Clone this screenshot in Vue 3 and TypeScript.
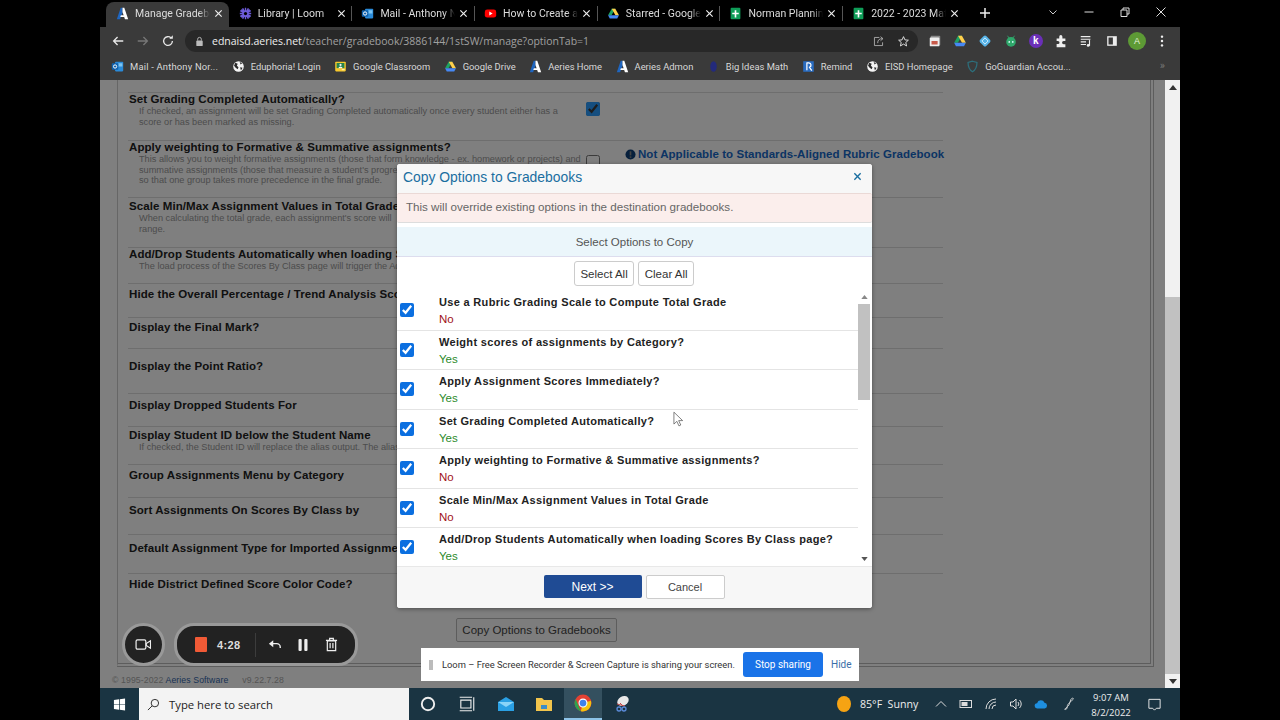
<script setup lang="ts">
// --- favicon and small icon artwork, 16x16 viewBox ---
const icons: Record<string, string> = {
  aeries: '<path d="M5.800 1H8v6L5 15H1z" fill="#1f66c0"/><path d="M8 1h2.200L15 15h-4L8 6z" fill="#fff"/><path d="M6 10h4l.8 2.400H5.200z" fill="#fff"/>',
  loom: '<g stroke="#6d5bd8" stroke-width="1.700"><path d="M8 1v14M1 8h14M3 3l10 10M13 3L3 13M4.500 1.500l7 13M11.500 1.500l-7 13M1.500 4.500l13 7M14.500 4.500l-13 7"/></g><circle cx="8" cy="8" r="2" fill="#000"/>',
  mail: '<rect x="5" y="2" width="10" height="12" rx="1" fill="#2a8ad8"/><rect x="9" y="4" width="5" height="4" fill="#7cc4f2"/><rect x="1" y="4" width="8" height="8" rx="1" fill="#0f62ae"/><circle cx="5" cy="8" r="2" fill="none" stroke="#fff" stroke-width="1.200"/>',
  youtube: '<rect x="1" y="3" width="14" height="10" rx="3" fill="#f00"/><path d="M6.500 5.600v4.800L10.600 8z" fill="#fff"/>',
  drive: '<path d="M5.800 2h4.400l-4.600 8H1.300z" fill="#1ea362"/><path d="M5.800 2h4.400l4.500 8h-4.400z" fill="#ffd04b"/><path d="M1.300 10h13.400L12.600 14H3.400z" fill="#4688f4"/>',
  sheets: '<rect x="2" y="1" width="12" height="14" rx="1.200" fill="#0f9d58"/><path d="M7 4h2v3h3v1.800H9V13H7V8.800H4V7h3z" fill="#fff"/>',
  globe: '<circle cx="8" cy="8" r="6.500" fill="#f4f4f4"/><path d="M4 3.500l3 1-1 2.500 2 2-1 2.500-2.500-2L2.500 7zM10 9l3 .5-2 3.500zM9.500 2.500l3 1.500-2 1.500z" fill="#2b2b2b"/>',
  classroom: '<rect x="1.500" y="2" width="13" height="12" rx="1" fill="#f8c92c"/><rect x="3.200" y="3.700" width="9.600" height="6.300" fill="#27834c"/><circle cx="8" cy="6" r="1.300" fill="#f3f3f3"/><path d="M5.500 10a2.500 2 0 0 1 5 0z" fill="#f3f3f3"/><rect x="9.500" y="11.500" width="3.500" height="1" fill="#fff"/>',
  bigideas: '<ellipse cx="8" cy="8" rx="4" ry="6.500" fill="#232a7c"/>',
  remind: '<rect x="1.500" y="1.500" width="13" height="13" fill="#2a6cc0"/><path d="M5.500 3.500h3a2.800 2.800 0 0 1 .8 5.400l2.700 4.100M6 3.500v9" fill="none" stroke="#fff" stroke-width="1.500"/>',
  goguardian: '<path d="M8 1.500l5.500 1.500c0 5-1.500 9-5.500 11.500C4 12 2.500 8 2.500 3z" fill="none" stroke="#2d6f7c" stroke-width="1.500"/>'
}

const tabs = [
  { title: 'Manage Gradebook', icon: 'aeries' },
  { title: 'Library | Loom', icon: 'loom' },
  { title: 'Mail - Anthony Norman', icon: 'mail' },
  { title: 'How to Create an Assignment', icon: 'youtube' },
  { title: 'Starred - Google Drive', icon: 'drive' },
  { title: 'Norman Planning Guide', icon: 'sheets' },
  { title: '2022 - 2023 Math Pacing', icon: 'sheets' }
]

const bookmarks = [
  { title: 'Mail - Anthony Nor...', icon: 'mail' },
  { title: 'Eduphoria! Login', icon: 'globe' },
  { title: 'Google Classroom', icon: 'classroom' },
  { title: 'Google Drive', icon: 'drive' },
  { title: 'Aeries Home', icon: 'aeries' },
  { title: 'Aeries Admon', icon: 'aeries' },
  { title: 'Big Ideas Math', icon: 'bigideas' },
  { title: 'Remind', icon: 'remind' },
  { title: 'EISD Homepage', icon: 'globe' },
  { title: 'GoGuardian Accou...', icon: 'goguardian' }
]

// height and title offset come from the gradebook options table
const pageRows = [
  { title: 'Set Grading Completed Automatically?', h: 48, top: 0, check: 'on', lines: ['If checked, an assignment will be set Grading Completed automatically once every student either has a', 'score or has been marked as missing.'] },
  { title: 'Apply weighting to Formative & Summative assignments?', h: 57, top: 0, check: 'off', lines: ['This allows you to weight formative assignments (those that form knowledge - ex. homework or projects) and', 'summative assignments (those that measure a student\'s progress', 'so that one group takes more precedence in the final grade.'] },
  { title: 'Scale Min/Max Assignment Values in Total Grade', h: 50, top: 2, lines: ['When calculating the total grade, each assignment\'s score will', 'range.'] },
  { title: 'Add/Drop Students Automatically when loading Scores', h: 36, top: 0, lines: ['The load process of the Scores By Class page will trigger the Add'] },
  { title: 'Hide the Overall Percentage / Trend Analysis Score', h: 34, top: 4, lines: [] },
  { title: 'Display the Final Mark?', h: 31, top: 3, lines: [] },
  { title: 'Display the Point Ratio?', h: 45, top: 11, lines: [] },
  { title: 'Display Dropped Students For', h: 33, top: 5, lines: [] },
  { title: 'Display Student ID below the Student Name', h: 38, top: 2, lines: ['If checked, the Student ID will replace the alias output. The alias'] },
  { title: 'Group Assignments Menu by Category', h: 33, top: 4, lines: [] },
  { title: 'Sort Assignments On Scores By Class by', h: 37, top: 6, lines: [] },
  { title: 'Default Assignment Type for Imported Assignments', h: 39, top: 7, lines: [] },
  { title: 'Hide District Defined Score Color Code?', h: 32, top: 4, lines: [] }
]

const copyOptions = [
  { title: 'Use a Rubric Grading Scale to Compute Total Grade', value: 'No' },
  { title: 'Weight scores of assignments by Category?', value: 'Yes' },
  { title: 'Apply Assignment Scores Immediately?', value: 'Yes' },
  { title: 'Set Grading Completed Automatically?', value: 'Yes' },
  { title: 'Apply weighting to Formative & Summative assignments?', value: 'No' },
  { title: 'Scale Min/Max Assignment Values in Total Grade', value: 'No' },
  { title: 'Add/Drop Students Automatically when loading Scores By Class page?', value: 'Yes' }
]
</script>

<template>
  <div class="screen">
    <div class="browser">
      <!-- ===== TAB STRIP ===== -->
      <div class="tab-strip">
        <div v-for="(tab, i) in tabs" :key="i" class="tab" :class="{ active: i === 0 }">
          <svg class="fav" viewBox="0 0 16 16" v-html="icons[tab.icon]"></svg>
          <span class="tab-title">{{ tab.title }}</span>
          <svg class="tab-x" viewBox="0 0 10 10"><path d="M1.500 1.500l7 7M8.500 1.500l-7 7" stroke="#eee" stroke-width="1.300"/></svg>
        </div>
        <svg class="new-tab" viewBox="0 0 12 12"><path d="M6 1v10M1 6h10" stroke="#eee" stroke-width="1.500"/></svg>
        <div class="win-controls">
          <svg viewBox="0 0 12 12"><path d="M2.500 4.500L6 8l3.500-3.500" fill="none" stroke="#ccc"/></svg>
          <svg viewBox="0 0 12 12"><path d="M1.500 6h9" stroke="#ddd"/></svg>
          <svg viewBox="0 0 12 12"><path d="M2 4h6v6.500H2zM4 4V2h6v6H8" fill="none" stroke="#ddd"/></svg>
          <svg viewBox="0 0 12 12"><path d="M1.500 1.500l9 9M10.500 1.500l-9 9" stroke="#ddd"/></svg>
        </div>
      </div>

      <!-- ===== TOOLBAR ===== -->
      <div class="toolbar">
        <div class="nav-btn"><svg viewBox="0 0 16 16"><path d="M14 8H3M7.500 3.500L3 8l4.500 4.500" fill="none" stroke="#e8e8e8" stroke-width="1.500"/></svg></div>
        <div class="nav-btn"><svg viewBox="0 0 16 16"><path d="M2 8h11M8.500 3.500L13 8l-4.500 4.500" fill="none" stroke="#777" stroke-width="1.500"/></svg></div>
        <div class="nav-btn"><svg viewBox="0 0 16 16"><path d="M13 8a5 5 0 1 1-1.500-3.500" fill="none" stroke="#e8e8e8" stroke-width="1.500"/><path d="M13.500 1.500v4h-4z" fill="#e8e8e8"/></svg></div>
        <div class="omnibox">
          <svg class="lock" viewBox="0 0 12 12"><rect x="2.500" y="5" width="7" height="6" rx="1" fill="#bbb"/><path d="M4 5V3.500a2 2 0 0 1 4 0V5" fill="none" stroke="#bbb"/></svg>
          <span class="url"><b>ednaisd.aeries.net</b>/teacher/gradebook/3886144/1stSW/manage?optionTab=1</span>
          <svg class="omni-icon share" viewBox="0 0 16 16"><path d="M9 3H3v10h10V9M7 10c0-4 2-5.500 6-5.500M10.500 2l3 2.500-3 2.500" fill="none" stroke="#bbb"/></svg>
          <svg class="omni-icon" viewBox="0 0 16 16"><path d="M8 2l1.800 4 4.200.4-3.200 2.800 1 4.300L8 11.200 4.200 13.500l1-4.300L2 6.400 6.200 6z" fill="none" stroke="#ddd" stroke-width="1.200"/></svg>
        </div>
        <div class="ext-icons">
          <div class="ext"><svg viewBox="0 0 16 16"><rect x="3" y="2" width="11" height="11" rx="1" fill="#888"/><rect x="2" y="4" width="11" height="10" rx="1" fill="#eee"/><rect x="4" y="8" width="7" height="4" fill="#c85a4a"/></svg></div>
          <div class="ext"><svg viewBox="0 0 16 16" v-html="icons.drive"></svg></div>
          <div class="ext"><svg viewBox="0 0 16 16"><rect x="3" y="3" width="10" height="10" rx="2" transform="rotate(45 8 8)" fill="#58b4e8"/><rect x="5.500" y="5.500" width="5" height="5" transform="rotate(45 8 8)" fill="none" stroke="#d5f0ff"/></svg></div>
          <div class="ext"><svg viewBox="0 0 16 16"><circle cx="8" cy="9" r="5.500" fill="#2fa86b"/><path d="M4 2l2 3M12 2l-2 3" stroke="#2fa86b"/><circle cx="6" cy="9" r="1" fill="#dff"/><circle cx="10" cy="9" r="1" fill="#dff"/></svg></div>
          <div class="ext"><span class="k-badge">k</span></div>
          <div class="ext"><svg viewBox="0 0 16 16"><path d="M3 5h3V3a1.800 1.800 0 0 1 3.600 0v2h3.400v3h-2a1.800 1.800 0 0 0 0 3.600h2V15H3v-3.500h1.500a1.800 1.800 0 0 0 0-3.600H3z" fill="#eee"/></svg></div>
          <div class="ext"><svg viewBox="0 0 16 16"><path d="M2 3h11M2 6h11M2 9h6M2 12h6" stroke="#eee" stroke-width="1.300"/><path d="M12 7v6.500" stroke="#eee" stroke-width="1.300"/><circle cx="10.500" cy="13" r="1.600" fill="#eee"/></svg></div>
          <div class="ext"><svg viewBox="0 0 16 16"><rect x="2.500" y="2.500" width="11" height="11" fill="#eee"/><rect x="4" y="4" width="5" height="8" fill="#3a3a3a"/></svg></div>
          <div class="ext"><span class="avatar">A</span></div>
          <div class="ext"><svg viewBox="0 0 16 16"><circle cx="8" cy="3" r="1.400" fill="#eee"/><circle cx="8" cy="8" r="1.400" fill="#eee"/><circle cx="8" cy="13" r="1.400" fill="#eee"/></svg></div>
        </div>
      </div>

      <!-- ===== BOOKMARKS ===== -->
      <div class="bookmarks">
        <div v-for="(bm, i) in bookmarks" :key="i" class="bookmark">
          <svg class="fav" viewBox="0 0 16 16" v-html="icons[bm.icon]"></svg>
          <span>{{ bm.title }}</span>
        </div>
        <span class="more">»</span>
      </div>

      <!-- ===== PAGE ===== -->
      <div class="page">
        <div class="page-main">
          <div class="frame">
            <div
              v-for="(row, i) in pageRows"
              :key="i"
              class="opt-row"
              :style="{ height: row.h + 'px', paddingTop: row.top + 'px' }"
            >
              <div class="opt-text">
                <div class="opt-title">{{ row.title }}</div>
                <div v-for="(line, j) in row.lines" :key="j" class="opt-desc">{{ line }}</div>
              </div>
              <input v-if="row.check" class="opt-check" :class="'check-' + row.check" type="checkbox" :checked="row.check === 'on'" />
              <div v-if="row.check === 'off'" class="not-applicable">
                <svg viewBox="0 0 12 12"><circle cx="6" cy="6" r="5.500" fill="#0d3f78"/><rect x="5.100" y="2.500" width="1.800" height="4.500" fill="#888"/><rect x="5.100" y="8" width="1.800" height="1.700" fill="#888"/></svg>
                Not Applicable to Standards-Aligned Rubric Gradebook
              </div>
            </div>
            <button class="copy-btn">Copy Options to Gradebooks</button>
          </div>
          <div class="page-footer">© 1995-2022 <span class="aeries-link">Aeries Software</span><span class="version">v9.22.7.28</span></div>
        </div>
        <div class="page-scroll">
          <div class="page-arrow"><svg viewBox="0 0 8 5"><path d="M4 0l4 5H0z" fill="#333"/></svg></div>
          <div class="page-track"></div>
          <div class="page-thumb"></div>
          <div class="page-arrow"><svg viewBox="0 0 8 5"><path d="M0 0h8L4 5z" fill="#333"/></svg></div>
        </div>

        <div class="backdrop"></div>

        <!-- ===== COPY OPTIONS DIALOG ===== -->
        <div class="modal">
          <div class="modal-head">
            <span>Copy Options to Gradebooks</span>
            <svg viewBox="0 0 10 10"><path d="M1.500 1.500l7 7M8.500 1.500l-7 7" stroke="#1a6ea0" stroke-width="1.500"/></svg>
          </div>
          <div class="modal-alert">This will override existing options in the destination gradebooks.</div>
          <div class="modal-band">Select Options to Copy</div>
          <div class="modal-actions">
            <button>Select All</button>
            <button>Clear All</button>
          </div>
          <div class="modal-list">
            <div class="list-rows">
              <div v-for="(opt, i) in copyOptions" :key="i" class="list-row">
                <input type="checkbox" checked />
                <div>
                  <div class="list-title">{{ opt.title }}</div>
                  <div class="list-value" :class="opt.value === 'Yes' ? 'yes' : 'no'">{{ opt.value }}</div>
                </div>
              </div>
            </div>
            <div class="list-scroll">
              <svg viewBox="0 0 8 5"><path d="M4 0l4 5H0z" fill="#888"/></svg>
              <div class="list-thumb"></div>
              <div class="list-gap"></div>
              <svg viewBox="0 0 8 5"><path d="M0 0h8L4 5z" fill="#555"/></svg>
            </div>
          </div>
          <div class="modal-foot">
            <button class="next-btn">Next &gt;&gt;</button>
            <button class="cancel-btn">Cancel</button>
          </div>
        </div>

        <!-- mouse pointer -->
        <svg class="pointer" viewBox="0 0 12 18"><path d="M1 1v13l3.200-3 2.300 5 2-1-2.300-4.800H10.500z" fill="#fff" stroke="#555" stroke-width=".8"/></svg>

        <!-- ===== RECORDER CONTROLS ===== -->
        <div class="recorder">
          <div class="rec-cam">
            <svg viewBox="0 0 18 14"><rect x="1" y="2" width="10.500" height="10" rx="1.500" fill="none" stroke="#eee" stroke-width="1.300"/><path d="M12 6l4.500-3v8L12 8z" fill="none" stroke="#eee" stroke-width="1.200"/></svg>
          </div>
          <div class="rec-pill">
            <span class="rec-stop"></span>
            <span class="rec-time">4:28</span>
            <span class="rec-sep"></span>
            <svg class="rec-undo" viewBox="0 0 16 14"><path d="M3.500 6H10a4 4 0 0 1 4 4v1" fill="none" stroke="#eee" stroke-width="1.600"/><path d="M1 6l5-4v8z" fill="#eee"/></svg>
            <svg class="rec-pause" viewBox="0 0 12 14"><rect x="1.500" y="1" width="3.200" height="12" rx="1" fill="#eee"/><rect x="7.300" y="1" width="3.200" height="12" rx="1" fill="#eee"/></svg>
            <svg class="rec-trash" viewBox="0 0 14 16"><path d="M2.500 4h9v10.500h-9zM1 3.500h12M5 3V1.500h4V3M5.500 6.500v5.500M8.500 6.500v5.500" fill="none" stroke="#eee" stroke-width="1.300"/></svg>
          </div>
        </div>

        <!-- ===== SCREEN SHARE NOTICE ===== -->
        <div class="share-bar">
          <span class="grip"></span>
          <span class="share-text">Loom – Free Screen Recorder &amp; Screen Capture is sharing your screen.</span>
          <button class="stop-btn">Stop sharing</button>
          <span class="hide-link">Hide</span>
        </div>
      </div>

      <!-- ===== TASKBAR ===== -->
      <div class="taskbar">
        <div class="start"><svg viewBox="0 0 14 14"><path d="M1 2.200L6.500 1.400v5.200H1zM7.300 1.300L13 .5v6.100H7.300zM1 7.400h5.500v5.200L1 11.800zM7.300 7.400H13v6.100l-5.700-.8z" fill="#fff"/></svg></div>
        <div class="search">
          <svg viewBox="0 0 14 14"><circle cx="8.500" cy="5.500" r="4" fill="none" stroke="#222"/><path d="M5.500 8.500L1 13" stroke="#222"/></svg>
          <span>Type here to search</span>
        </div>
        <div class="task-icon"><svg viewBox="0 0 16 16"><circle cx="8" cy="8" r="5.500" fill="none" stroke="#eee" stroke-width="1.700"/></svg></div>
        <div class="task-icon"><svg viewBox="0 0 16 16"><path d="M2.500 4.500h9v7h-9zM1.500 2h11M1.500 14h11M14 2v12" fill="none" stroke="#eee"/></svg></div>
        <div class="task-icon"><svg viewBox="0 0 18 16"><path d="M1 6l8-5 8 5v9H1z" fill="#2aa0e4"/><path d="M1 6l8 5 8-5" fill="#8ad4f8"/></svg></div>
        <div class="task-icon"><svg viewBox="0 0 18 16"><path d="M1 2h6l2 2h8v11H1z" fill="#f2c54c"/><rect x="6" y="9" width="6" height="4" fill="#3a8dc8"/></svg></div>
        <div class="task-icon active-task">
          <svg viewBox="0 0 16 16"><circle cx="8" cy="8" r="7.500" fill="#e34133"/><path d="M15 6a7.500 7.500 0 0 1-9 9.300L8 8z" fill="#f4c20d"/><path d="M1.500 4.500L6 15.300A7.500 7.500 0 0 1 1.500 4.500z" fill="#2da44e"/><circle cx="8" cy="8" r="3.500" fill="#3f82ed" stroke="#fff"/></svg>
        </div>
        <div class="task-icon"><svg viewBox="0 0 18 18"><ellipse cx="10" cy="6" rx="6" ry="4.500" fill="#e8e8e8" transform="rotate(-30 10 6)"/><path d="M4 9l8 2M7 8l3 3" stroke="#c04a4a"/><circle cx="6" cy="14" r="2" fill="none" stroke="#5a8ad8" stroke-width="1.300"/><circle cx="11" cy="14" r="2" fill="none" stroke="#5a8ad8" stroke-width="1.300"/></svg></div>
        <div class="task-spacer"></div>
        <div class="weather">
          <svg viewBox="0 0 14 16"><ellipse cx="7" cy="8" rx="7" ry="8" fill="#f6a313"/></svg>
          <span>85°F&nbsp; Sunny</span>
        </div>
        <div class="tray"><svg viewBox="0 0 14 14"><path d="M2 9.500L7 4.500l5 5" fill="none" stroke="#ddd"/></svg></div>
        <div class="tray"><svg viewBox="0 0 14 14"><rect x="1" y="3.500" width="11.500" height="7" fill="none" stroke="#ddd"/><rect x="2.500" y="5" width="6" height="4" fill="#ddd"/></svg></div>
        <div class="tray"><svg viewBox="0 0 14 14"><path d="M2 12A10 10 0 0 1 12 2M5 12a7 7 0 0 1 7-7M8 12a4 4 0 0 1 4-4" fill="none" stroke="#ddd"/></svg></div>
        <div class="tray"><svg viewBox="0 0 14 14"><path d="M1.500 5H4l3-3v10L4 9H1.500zM9 5a3 3 0 0 1 0 4M10.500 3a5.500 5.500 0 0 1 0 8" fill="none" stroke="#ddd"/></svg></div>
        <div class="tray cloud"><svg viewBox="0 0 16 12"><path d="M4 11a3 3 0 0 1-.5-6A4.500 4.500 0 0 1 12 4.500a3.300 3.300 0 0 1 .3 6.500z" fill="#1e8fe0"/></svg></div>
        <div class="tray wide"><svg viewBox="0 0 14 16"><path d="M2 14c2 1 3-1 3-3s1-3 3-5 4-3 4-4-2-1-3 1-1 4-2 6-3 3-5 5z" fill="none" stroke="#ddd"/></svg></div>
        <div class="clock"><div>9:07 AM</div><div>8/2/2022</div></div>
        <div class="notify"><svg viewBox="0 0 16 16"><path d="M2 2.500h12v9.500H10l-2 2-2-2H2z" fill="none" stroke="#eee"/></svg></div>
      </div>
    </div>
  </div>
</template>

<style scoped>
.screen {
  width: 1280px;
  height: 720px;
  background: #000;
  display: flex;
  justify-content: center;
  overflow: hidden;
}

.browser {
  width: 1080px;
  height: 720px;
  display: flex;
  flex-direction: column;
  font-family: 'Liberation Sans', Arial, sans-serif;
}

/* --- Tabs --- */
.tab-strip {
  height: 27px;
  background: #000;
  display: flex;
  align-items: flex-end;
  padding-left: 6px;
  flex-shrink: 0;
}

.tab {
  width: 122.700px;
  height: 25px;
  display: flex;
  align-items: center;
  padding: 0 0 3px 10px;
  box-sizing: border-box;
  color: #ddd;
  font-family: Roboto, sans-serif;
  font-size: 10.500px;
  position: relative;
}

.tab:not(.active):not(:nth-child(2))::before {
  content: '';
  position: absolute;
  left: 0;
  top: 4px;
  height: 15px;
  width: 1px;
  background: #555;
}

.tab.active {
  background: #3a3a3a;
  border-radius: 8px 8px 0 0;
}

.fav {
  width: 13px;
  height: 13px;
  flex-shrink: 0;
}

.tab-title {
  width: 75px;
  margin-left: 6px;
  overflow: hidden;
  white-space: nowrap;
  -webkit-mask-image: linear-gradient(to right, #000 85%, transparent);
  mask-image: linear-gradient(to right, #000 85%, transparent);
}

.tab-x {
  width: 9px;
  height: 9px;
  margin-left: 4px;
}

.new-tab {
  width: 12px;
  height: 12px;
  margin: 0 0 8px 14px;
}

.win-controls {
  display: flex;
  position: absolute;
  top: 6px;
  left: 1047px;
  gap: 24px;
}

.win-controls svg {
  width: 12px;
  height: 12px;
}

/* --- Toolbar --- */
.toolbar {
  height: 28px;
  background: #3a3a3a;
  display: flex;
  align-items: center;
  padding-left: 5px;
  flex-shrink: 0;
}

.nav-btn {
  width: 25px;
  display: flex;
  justify-content: center;
}

.nav-btn svg {
  width: 14px;
  height: 14px;
}

.omnibox {
  width: 733px;
  height: 22px;
  margin-left: 5px;
  background: #282828;
  border-radius: 11px;
  display: flex;
  align-items: center;
  padding: 0 8px 0 9px;
  box-sizing: border-box;
  font-family: 'Open Sans', sans-serif;
  font-size: 10.500px;
  color: #a0a0a0;
}

.lock {
  width: 11px;
  height: 11px;
}

.url {
  margin-left: 7px;
  flex: 1;
  white-space: nowrap;
}

.url b {
  font-weight: 400;
  color: #eee;
}

.omni-icon {
  width: 13px;
  height: 13px;
}

.share {
  margin-right: 12px;
}

.ext-icons {
  display: flex;
  margin-left: 4px;
}

.ext {
  width: 25.300px;
  display: flex;
  justify-content: center;
  align-items: center;
}

.ext svg {
  width: 14px;
  height: 14px;
}

.k-badge {
  width: 14px;
  height: 14px;
  border-radius: 50%;
  background: #6a2fb8;
  color: #fff;
  font-size: 10px;
  font-weight: 700;
  text-align: center;
  line-height: 14px;
}

.avatar {
  width: 18px;
  height: 18px;
  border-radius: 50%;
  background: #5d9a35;
  color: #e8f3de;
  font-size: 9px;
  text-align: center;
  line-height: 18px;
}

/* --- Bookmarks --- */
.bookmarks {
  height: 25px;
  box-sizing: border-box;
  padding: 0 0 2px 11px;
  background: #3a3a3a;
  display: flex;
  align-items: center;
  gap: 13.500px;
  position: relative;
  flex-shrink: 0;
  font-family: Roboto, sans-serif;
  font-size: 9.400px;
  color: #d8d8d8;
}

.bookmark {
  display: flex;
  align-items: center;
  gap: 6px;
  white-space: nowrap;
}

.bookmark:first-child {
  letter-spacing: .2px;
}

.more {
  position: absolute;
  right: 15px;
  top: 4px;
  color: #777;
  font-size: 11px;
}

/* --- Page under the dialog --- */
.page {
  height: 608px;
  display: flex;
  position: relative;
  background: #fff;
  flex-shrink: 0;
}

.page-main {
  flex: 1;
  min-width: 0;
  overflow: hidden;
}

.frame {
  height: 587px;
  width: 1037px;
  margin-left: 17px;
  box-sizing: border-box;
  padding-top: 12px;
  border-left: 1px solid #ccc;
  border-right: 4px double #bbb;
  border-bottom: 4px double #bbb;
}

.opt-row {
  width: 815px;
  margin-left: 10px;
  box-sizing: border-box;
  position: relative;
  border-top: 1px solid #ddd;
  white-space: nowrap;
}

.opt-title {
  margin-top: -1px;
  padding-left: 1px;
  font-size: 11.500px;
  font-weight: 700;
  line-height: 14px;
  color: #222;
  letter-spacing: .08px;
}

.opt-desc {
  padding-left: 11px;
  font-size: 9.200px;
  line-height: 10.500px;
  color: #999;
}

.opt-check {
  position: absolute;
  left: 458px;
  margin: 0;
  width: 14px;
  height: 14px;
  accent-color: #2a9cff;
}

.check-on {
  top: 9px;
}

.check-off {
  top: 14px;
}

.not-applicable {
  position: absolute;
  left: 497px;
  top: 7px;
  display: flex;
  align-items: center;
  gap: 2px;
  font-size: 11.500px;
  font-weight: 700;
  letter-spacing: .06px;
  color: #1668c8;
}

.not-applicable svg {
  width: 11px;
  height: 11px;
}

.copy-btn {
  margin: 13px 0 0 338px;
  width: 161px;
  height: 24px;
  background: #fafafa;
  border: 1px solid #bbb;
  border-radius: 2px;
  font-family: inherit;
  font-size: 11.500px;
  color: #444;
  padding: 0;
}

.page-footer {
  margin-top: 8px;
  padding-left: 12px;
  font-size: 8.700px;
  color: #aaa;
  letter-spacing: .1px;
}

.aeries-link {
  color: #36a;
}

.version {
  margin-left: 14px;
}

.page-scroll {
  width: 15px;
  display: flex;
  flex-direction: column;
  background: #f1f1f1;
}

.page-arrow {
  height: 14px;
  display: flex;
  align-items: center;
  justify-content: center;
  flex-shrink: 0;
}

.page-arrow svg {
  width: 8px;
  height: 5px;
}

.page-track {
  height: 203px;
}

.page-thumb {
  flex: 1;
  background: #c1c1c1;
}

.backdrop {
  position: absolute;
  left: 0;
  top: 0;
  bottom: 0;
  width: 1065px;
  background: rgba(0, 0, 0, 0.5);
}

/* --- Dialog --- */
.modal {
  position: absolute;
  left: 297px;
  top: 84px;
  width: 475px;
  height: 444px;
  background: #fff;
  border-radius: 3px;
  box-shadow: 0 1px 4px rgba(0, 0, 0, 0.4);
  display: flex;
  flex-direction: column;
  overflow: hidden;
}

.modal-head {
  height: 29px;
  background: #f7f7f7;
  display: flex;
  align-items: center;
  justify-content: space-between;
  padding: 0 10px 4px 6px;
  box-sizing: border-box;
  font-size: 13.900px;
  color: #1a6ea0;
  flex-shrink: 0;
}

.modal-head svg {
  width: 9px;
  height: 9px;
}

.modal-alert {
  height: 30px;
  box-sizing: border-box;
  background: #fbeeec;
  border-top: 1px solid #ead9d6;
  border-bottom: 1px solid #ddd;
  border-radius: 2px;
  padding-left: 9px;
  line-height: 26px;
  font-size: 11.600px;
  color: #666;
  flex-shrink: 0;
}

.modal-band {
  height: 30px;
  margin-top: 4px;
  box-sizing: border-box;
  background: #ebf6fb;
  border-bottom: 1px solid #dde;
  text-align: center;
  line-height: 30px;
  font-size: 11.500px;
  color: #555;
  flex-shrink: 0;
}

.modal-actions {
  height: 33px;
  display: flex;
  justify-content: center;
  align-items: center;
  gap: 4px;
  padding-right: 1px;
  flex-shrink: 0;
}

.modal-actions button {
  height: 25px;
  padding: 0 5.500px;
  background: #fff;
  border: 1px solid #ccc;
  border-radius: 3px;
  font-family: inherit;
  font-size: 11.500px;
  color: #333;
}

.modal-list {
  height: 276px;
  display: flex;
  overflow: hidden;
  flex-shrink: 0;
}

.list-rows {
  width: 461px;
  padding-top: 1px;
  flex-shrink: 0;
}

.list-row {
  height: 39.500px;
  box-sizing: border-box;
  display: flex;
  border-bottom: 1px solid #e4e4e4;
}

.list-row:last-child {
  border-bottom: none;
}

.list-row input {
  width: 14px;
  height: 14px;
  margin: 12px 25px 0 3px;
  accent-color: #0b6fe0;
  flex-shrink: 0;
}

.list-title {
  margin-top: 4px;
  font-size: 11px;
  font-weight: 700;
  line-height: 14px;
  color: #222;
  letter-spacing: .32px;
  white-space: nowrap;
}

.list-value {
  margin-top: 4px;
  font-size: 11.500px;
  line-height: 13px;
}

.yes {
  color: #2a8a2a;
}

.no {
  color: #a01020;
}

.list-scroll {
  width: 12px;
  display: flex;
  flex-direction: column;
  align-items: center;
  background: #fff;
}

.list-scroll svg {
  width: 7px;
  height: 4px;
  margin: 5px 0;
  flex-shrink: 0;
}

.list-thumb {
  width: 12px;
  height: 96px;
  background: #c1c1c1;
}

.list-gap {
  flex: 1;
}

.modal-foot {
  flex: 1;
  background: #f7f7f7;
  border-top: 1px solid #e8e8e8;
  display: flex;
  justify-content: center;
  align-items: center;
  gap: 4px;
  padding-bottom: 2px;
  padding-right: 1px;
}

.next-btn {
  width: 98px;
  height: 23px;
  background: #1f4b94;
  border: none;
  border-radius: 2px;
  color: #fff;
  font-family: inherit;
  font-size: 12px;
}

.cancel-btn {
  width: 79px;
  height: 24px;
  background: #fff;
  border: 1px solid #ccc;
  border-radius: 2px;
  color: #444;
  font-family: inherit;
  font-size: 11px;
}

.pointer {
  position: absolute;
  left: 573px;
  top: 331px;
  width: 11px;
  height: 17px;
}

/* --- Recorder --- */
.recorder {
  position: absolute;
  left: 22px;
  top: 543px;
  display: flex;
  align-items: center;
  gap: 9px;
}

.rec-cam {
  width: 37px;
  height: 37px;
  border-radius: 50%;
  background: #222;
  border: 3px solid #999;
  display: flex;
  align-items: center;
  justify-content: center;
}

.rec-cam svg {
  width: 17px;
  height: 13px;
}

.rec-pill {
  width: 160px;
  height: 37px;
  border-radius: 20px;
  background: #222;
  border: 3px solid #999;
  display: flex;
  align-items: center;
  padding-left: 18px;
  box-sizing: content-box;
}

.rec-stop {
  width: 12px;
  height: 15px;
  background: #f15a36;
  border-radius: 1px;
}

.rec-time {
  margin-left: 10px;
  width: 27px;
  color: #ddd;
  font-size: 11px;
  font-weight: 700;
  letter-spacing: .4px;
}

.rec-sep {
  width: 1px;
  height: 24px;
  background: #3c3c3c;
  margin-left: 11px;
}

.rec-undo {
  width: 14px;
  height: 13px;
  margin-left: 12px;
}

.rec-pause {
  width: 12px;
  height: 14px;
  margin-left: 15px;
}

.rec-trash {
  width: 13px;
  height: 15px;
  margin-left: 16px;
}

/* --- Screen share notice --- */
.share-bar {
  position: absolute;
  left: 321px;
  top: 568px;
  width: 438px;
  height: 33px;
  background: #fff;
  display: flex;
  align-items: center;
  box-sizing: border-box;
  padding-left: 8px;
  font-family: Roboto, sans-serif;
  font-size: 9.350px;
  color: #333;
  white-space: nowrap;
}

.grip {
  width: 4px;
  height: 10px;
  border-left: 2px solid #bbb;
  border-right: 2px solid #bbb;
  box-sizing: border-box;
}

.share-text {
  margin-left: 9px;
  width: 301px;
}

.stop-btn {
  width: 80px;
  height: 25px;
  background: #1a73e8;
  border: none;
  border-radius: 3px;
  color: #fff;
  font-family: inherit;
  font-size: 10px;
  padding: 0;
}

.hide-link {
  margin-left: 8px;
  font-size: 10px;
  color: #3a6ea8;
}

/* --- Taskbar --- */
.taskbar {
  flex: 1;
  background: #1a3442;
  display: flex;
  align-items: stretch;
  font-family: 'Open Sans', sans-serif;
  color: #eee;
}

.start {
  width: 39px;
  display: flex;
  align-items: center;
  justify-content: center;
}

.start svg {
  width: 13px;
  height: 13px;
}

.search {
  width: 270px;
  background: #f3f3f3;
  display: flex;
  align-items: center;
  gap: 9px;
  padding-left: 8px;
  box-sizing: border-box;
  color: #222;
  font-size: 11.300px;
}

.search svg {
  width: 13px;
  height: 13px;
}

.task-icon {
  width: 38.700px;
  display: flex;
  align-items: center;
  justify-content: center;
  box-sizing: border-box;
}

.task-icon svg {
  width: 18px;
  height: 18px;
}

.active-task {
  background: #34505f;
  border-bottom: 2px solid #8ec4e8;
}

.task-spacer {
  flex: 1;
}

.weather {
  display: flex;
  align-items: center;
  gap: 9px;
  font-size: 10.600px;
  width: 91px;
  white-space: nowrap;
}

.weather svg {
  width: 14px;
  height: 16px;
}

.tray {
  width: 25px;
  display: flex;
  align-items: center;
  justify-content: center;
}

.tray svg {
  width: 14px;
  height: 14px;
}

.tray.cloud {
  width: 26px;
}

.tray.wide {
  width: 29px;
}

.clock {
  width: 56px;
  text-align: center;
  font-size: 9.500px;
  line-height: 15px;
  padding-top: 2px;
  white-space: nowrap;
}

.notify {
  width: 30px;
  margin-right: 11px;
  display: flex;
  align-items: center;
  justify-content: center;
}

.notify svg {
  width: 15px;
  height: 15px;
}
</style>
